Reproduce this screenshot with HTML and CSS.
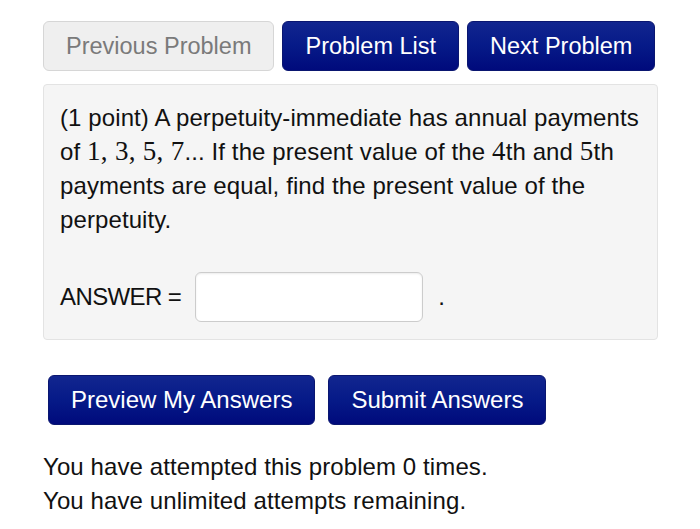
FILE: index.html
```html
<!DOCTYPE html>
<html>
<head>
<meta charset="utf-8">
<link rel="stylesheet" href="styles.css">
</head>
<body>
<div class="page">
  <nav class="nav">
    <span class="btn btn-disabled">Previous Problem</span>
    <span class="btn btn-primary">Problem List</span>
    <span class="btn btn-primary">Next Problem</span>
  </nav>
  <div class="problem">
    <p class="statement">(1 point) A perpetuity-immediate has annual payments of <span class="math">1, 3, 5, 7</span>... If the present value of the <span class="math">4</span>th and <span class="math">5</span>th payments are equal, find the present value of the perpetuity.</p>
    <div class="answer-row">
      <span class="label">ANSWER =</span>
      <span class="input"></span>
      <span class="dot">.</span>
    </div>
  </div>
  <div class="actions">
    <span class="btn btn-primary btn-large">Preview My Answers</span>
    <span class="btn btn-primary btn-large">Submit Answers</span>
  </div>
  <div class="attempts">
    <div>You have attempted this problem 0 times.</div>
    <div>You have unlimited attempts remaining.</div>
  </div>
</div>
</body>
</html>
```
FILE: styles.css
```css
html, body {
  margin: 0;
  background: #ffffff;
}
.page {
  padding: 21px 0 0 43px;
  width: 615px;
  font-family: "Liberation Sans", Arial, sans-serif;
  font-size: 24px;
  letter-spacing: 0.1px;
  color: #111;
}
.nav {
  display: flex;
  gap: 8px;
}
.btn {
  display: inline-flex;
  align-items: center;
  justify-content: center;
  box-sizing: border-box;
  height: 50px;
  padding: 0 22px;
  border-radius: 6px;
  font-size: 23.5px;
  letter-spacing: 0;
  white-space: nowrap;
}
.btn-large {
  font-size: 24px;
}
.btn-disabled {
  background: #efefef;
  border: 1px solid #d6d6d6;
  color: #7a7a7a;
}
.btn-primary {
  background: linear-gradient(to bottom, #12268f 0%, #061a88 50%, #000a7c 100%);
  border: 1px solid #0a1670;
  color: #ffffff;
}
.problem {
  margin-top: 13px;
  box-sizing: border-box;
  width: 615px;
  background: #f5f5f5;
  border: 1px solid #e3e3e3;
  border-radius: 4px;
  padding: 16px 16px 17px 16px;
}
.statement {
  margin: 0 0 35px 0;
  line-height: 34px;
}
.math {
  font-family: "Liberation Serif", "Times New Roman", serif;
  font-size: 27px;
  line-height: 0;
  letter-spacing: 0.3px;
}
.answer-row {
  display: flex;
  align-items: center;
  height: 50px;
}
.label {
  margin-right: 14px;
  letter-spacing: -0.6px;
}
.input {
  box-sizing: border-box;
  width: 228px;
  height: 50px;
  background: #fff;
  border: 1px solid #cccccc;
  border-radius: 6px;
  box-shadow: inset 0 1px 2px rgba(0,0,0,0.08);
}
.dot {
  margin-left: 15px;
}
.actions {
  display: flex;
  gap: 13px;
  margin: 35px 0 0 5px;
}
.attempts {
  margin-top: 25px;
  line-height: 34px;
}
```
